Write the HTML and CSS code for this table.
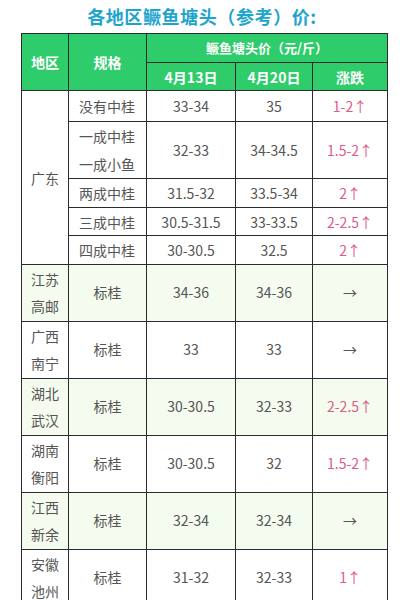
FILE: index.html
```html
<!DOCTYPE html>
<html lang="zh">
<head>
<meta charset="utf-8">
<link rel="stylesheet" href="styles.css">
</head>
<body>
<h1 class="title">各地区鳜鱼塘头（参考）价:</h1>
<table class="price">
  <colgroup>
    <col class="c1"><col class="c2"><col class="c3"><col class="c4"><col class="c5">
  </colgroup>
  <thead>
    <tr class="h1">
      <th rowspan="2">地区</th>
      <th rowspan="2">规格</th>
      <th colspan="3" class="small">鳜鱼塘头价（元/斤）</th>
    </tr>
    <tr class="h2">
      <th>4月13日</th>
      <th>4月20日</th>
      <th>涨跌</th>
    </tr>
  </thead>
  <tbody>
    <tr class="r31">
      <td rowspan="5" class="region">广东</td>
      <td class="spec">没有中桂</td><td>33-34</td><td>35</td><td class="up">1-2↑</td>
    </tr>
    <tr class="r56">
      <td class="spec">一成中桂<br>一成小鱼</td><td>32-33</td><td>34-34.5</td><td class="up">1.5-2↑</td>
    </tr>
    <tr class="r29">
      <td class="spec">两成中桂</td><td>31.5-32</td><td>33.5-34</td><td class="up">2↑</td>
    </tr>
    <tr class="r28">
      <td class="spec">三成中桂</td><td>30.5-31.5</td><td>33-33.5</td><td class="up">2-2.5↑</td>
    </tr>
    <tr class="r29">
      <td class="spec">四成中桂</td><td>30-30.5</td><td>32.5</td><td class="up">2↑</td>
    </tr>
    <tr class="rg alt">
      <td>江苏<br>高邮</td><td>标桂</td><td>34-36</td><td>34-36</td><td>→</td>
    </tr>
    <tr class="rg">
      <td>广西<br>南宁</td><td>标桂</td><td>33</td><td>33</td><td>→</td>
    </tr>
    <tr class="rg alt">
      <td>湖北<br>武汉</td><td>标桂</td><td>30-30.5</td><td>32-33</td><td class="up">2-2.5↑</td>
    </tr>
    <tr class="rg">
      <td>湖南<br>衡阳</td><td>标桂</td><td>30-30.5</td><td>32</td><td class="up">1.5-2↑</td>
    </tr>
    <tr class="rg alt">
      <td>江西<br>新余</td><td>标桂</td><td>32-34</td><td>32-34</td><td>→</td>
    </tr>
    <tr class="rg">
      <td>安徽<br>池州</td><td>标桂</td><td>31-32</td><td>32-33</td><td class="up">1↑</td>
    </tr>
  </tbody>
</table>
</body>
</html>
```

FILE: styles.css
```css
html, body {
  margin: 0;
  padding: 0;
  background: #ffffff;
}
body {
  font-family: "Noto Sans CJK SC", "Noto Sans", sans-serif;
  color: #555555;
}
.title {
  margin: 0;
  height: 33px;
  line-height: 33px;
  text-align: center;
  font-size: 18px;
  font-weight: 700;
  color: #1fa5cc;
  letter-spacing: 0.6px;
}
.price {
  margin-left: 21px;
  width: 366px;
  table-layout: fixed;
  border-collapse: collapse;
  font-size: 14px;
  line-height: 20px;
}
.c1 { width: 47px; }
.c2 { width: 78px; }
.c3 { width: 89px; }
.c4 { width: 77px; }
.c5 { width: 75px; }
.price th, .price td {
  border: 1.5px solid #2b2b2b;
  padding: 0;
  text-align: center;
  vertical-align: middle;
}
.price th {
  background: #2fcc6b;
  color: #ffffff;
  font-weight: 700;
  font-size: 14px;
}
.price th.small {
  font-size: 13px;
}
.h1 { height: 29px; }
.h2 { height: 28px; }
.r31 { height: 31px; }
.r56 { height: 56px; }
.r56 .spec { line-height: 28px; }
.r29 { height: 29px; }
.r28 { height: 28px; }
.rg { height: 57px; line-height: 27.5px; }
.alt td {
  background: #f4fbef;
}
.spec {
  text-align: left !important;
  padding-left: 10px !important;
}
.up {
  color: #df5b88;
}
```
